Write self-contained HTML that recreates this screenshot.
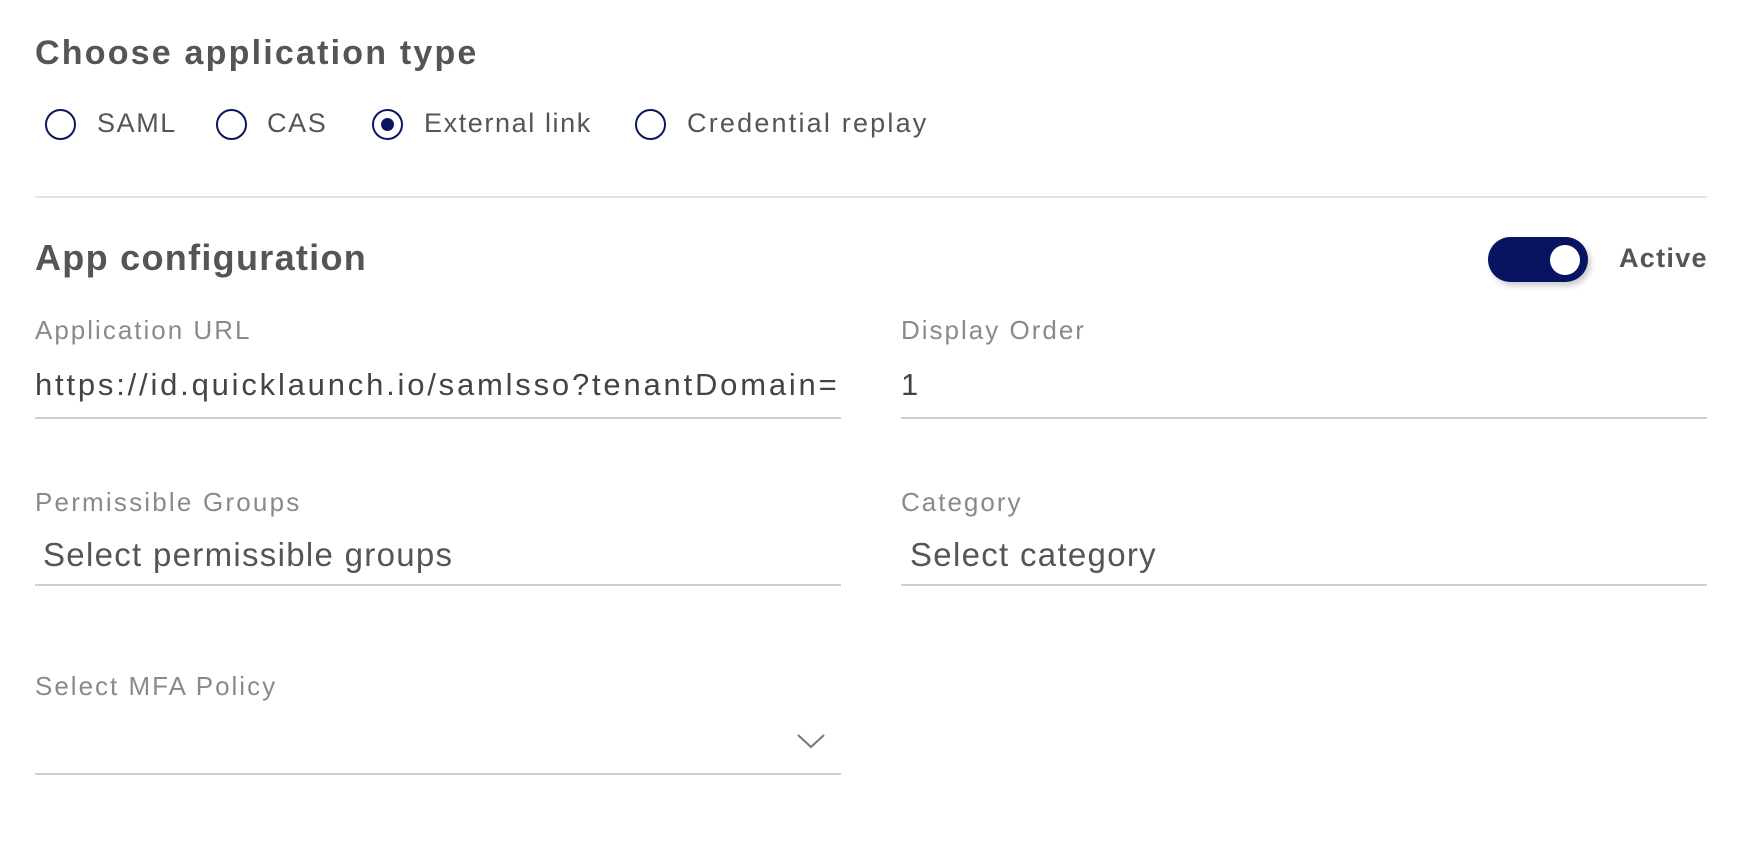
<!DOCTYPE html>
<html><head><meta charset="utf-8"><style>
*{margin:0;padding:0;box-sizing:border-box}
body{width:1740px;height:860px;background:#fff;font-family:"Liberation Sans",Arial,sans-serif;color:#555;position:relative;overflow:hidden}
.a{position:absolute;white-space:nowrap}
.h{font-weight:bold;color:#555;font-size:34px;letter-spacing:2.2px}
.radio{position:absolute;width:31px;height:31px;border:2px solid #0b1560;border-radius:50%;top:109px}
.radio.on::after{content:"";position:absolute;left:7px;top:7px;width:13px;height:13px;border-radius:50%;background:#0b1560}
.rl{position:absolute;top:108px;font-size:27px;color:#555;letter-spacing:1.6px}
.lbl{font-size:26px;color:#8a8a8a;letter-spacing:2px}
.line{position:absolute;height:2px;background:#cfcfcf}
</style></head><body>
<div class="a h" style="left:35px;top:34px">Choose application type</div>
<div class="radio" style="left:45px"></div><div class="rl" style="left:97px">SAML</div>
<div class="radio" style="left:216px"></div><div class="rl" style="left:267px">CAS</div>
<div class="radio on" style="left:372px"></div><div class="rl" style="left:424px">External link</div>
<div class="radio" style="left:635px"></div><div class="rl" style="left:687px;letter-spacing:2.2px">Credential replay</div>
<div class="line" style="left:35px;top:196px;width:1672px;height:2px;background:#e2e2e2"></div>
<div class="a h" style="left:35px;top:237px;font-size:36px;letter-spacing:1.3px">App configuration</div>
<div class="a" style="left:1488px;top:237px;width:100px;height:45px;border-radius:23px;background:#061462;box-shadow:3px 4px 6px rgba(0,0,0,0.2)"></div>
<div class="a" style="left:1550px;top:245px;width:30px;height:30px;border-radius:50%;background:#fff"></div>
<div class="a" style="left:1619px;top:243px;font-size:27px;font-weight:bold;color:#555;letter-spacing:1.3px">Active</div>
<div class="a lbl" style="left:35px;top:315px">Application URL</div>
<div class="a lbl" style="left:901px;top:315px">Display Order</div>
<div class="a" style="left:35px;top:367px;font-size:31px;color:#444;letter-spacing:2.8px">https://id.quicklaunch.io/samlsso?tenantDomain=</div>
<div class="a" style="left:901px;top:367px;font-size:31px;color:#444">1</div>
<div class="line" style="left:35px;top:417px;width:806px"></div>
<div class="line" style="left:901px;top:417px;width:806px"></div>
<div class="a lbl" style="left:35px;top:487px;letter-spacing:2.2px">Permissible Groups</div>
<div class="a lbl" style="left:901px;top:487px">Category</div>
<div class="a" style="left:43px;top:536px;font-size:33px;color:#555;letter-spacing:1.3px">Select permissible groups</div>
<div class="a" style="left:910px;top:536px;font-size:33px;color:#555;letter-spacing:1.3px">Select category</div>
<div class="line" style="left:35px;top:584px;width:806px"></div>
<div class="line" style="left:901px;top:584px;width:806px"></div>
<div class="a lbl" style="left:35px;top:671px">Select MFA Policy</div>
<svg class="a" style="left:796px;top:732px" width="30" height="18" viewBox="0 0 30 18"><path d="M2 3 L15 15 L28 3" fill="none" stroke="#777" stroke-width="2"/></svg>
<div class="line" style="left:35px;top:773px;width:806px"></div>
</body></html>
